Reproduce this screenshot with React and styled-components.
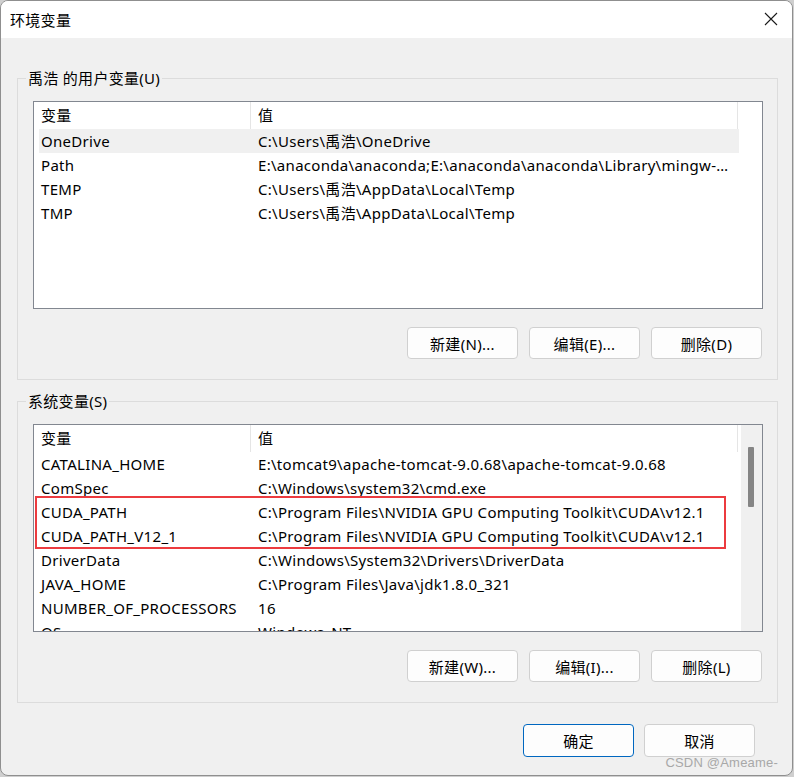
import React from 'react';
import styled, { createGlobalStyle } from 'styled-components';

const GlobalStyle = createGlobalStyle`
  *, *::before, *::after {
    box-sizing: border-box;
  }
  html, body {
    margin: 0;
    padding: 0;
    background: #cfcfcf;
  }
  body {
    font-family: "Noto Sans", "Noto Sans CJK SC", sans-serif;
    font-size: 15px;
    letter-spacing: 0.3px;
    color: #000000;
  }
`;

const Window = styled.div`
  position: relative;
  width: 793px;
  height: 776px;
  border: 1px solid #8f8f8f;
  border-radius: 8px;
  overflow: hidden;
  background: #f0f0f0;
  display: flex;
  flex-direction: column;
`;

const TitleBar = styled.div`
  height: 37px;
  flex: none;
  background: #ffffff;
  display: flex;
  align-items: center;
  justify-content: space-between;
  padding: 0 14px 0 9px;
`;

const Title = styled.span`
  font-size: 15px;
  padding-bottom: 1px;
`;

const CloseButton = styled.div`
  width: 14px;
  height: 14px;
  display: flex;
  margin-bottom: 2px;
`;

const Content = styled.div`
  flex: 1;
  padding: 40px 14px 0 16px;
  display: flex;
  flex-direction: column;
`;

const Group = styled.div`
  position: relative;
  height: 302px;
  border: 1px solid #dcdcdc;
  padding: 22px 14px 0 15px;
  margin-bottom: ${(p) => p.$gap || 0}px;
  display: flex;
  flex-direction: column;
`;

const Legend = styled.span`
  position: absolute;
  top: -11px;
  left: 8px;
  padding: 0 2px;
  line-height: 20px;
  background: #f0f0f0;
`;

const ListBox = styled.div`
  position: relative;
  width: 730px;
  height: 208px;
  flex: none;
  border: 1px solid #828790;
  background: #ffffff;
  display: flex;
  overflow: hidden;
`;

const ListMain = styled.div`
  flex: 1;
  min-width: 0;
`;

const Header = styled.div`
  display: grid;
  grid-template-columns: 217px 487px 1fr;
  height: 27px;
`;

const HeaderCell = styled.div`
  padding-left: 7px;
  line-height: 27px;
  border-right: ${(p) => (p.$last ? 'none' : '1px solid #e5e5e5')};
`;

const Row = styled.div`
  margin-left: 5px;
  margin-right: 2px;
  display: grid;
  grid-template-columns: 217px 1fr;
  height: 24px;
  line-height: 24px;
  background: ${(p) => (p.$selected ? '#f0f0f0' : 'transparent')};
`;

const Cell = styled.div`
  padding-left: 2px;
  white-space: nowrap;
  overflow: hidden;
  text-overflow: ellipsis;
`;

const ScrollTrack = styled.div`
  width: 21px;
  flex: none;
  position: relative;
  background: ${(p) => (p.$visible ? '#f0f0f0' : '#ffffff')};
`;

const ScrollThumb = styled.div`
  position: absolute;
  left: 7px;
  top: 22px;
  width: 6px;
  height: 60px;
  border-radius: 1px;
  background: #858585;
`;

const Highlight = styled.div`
  position: absolute;
  left: 1px;
  top: 71px;
  width: 691px;
  height: 53px;
  border: 2px solid #ec3b3f;
  pointer-events: none;
`;

const ButtonRow = styled.div`
  display: flex;
  justify-content: flex-end;
  gap: 11px;
  margin-top: 18px;
  padding-right: 1px;
`;

const Button = styled.button`
  width: 111px;
  height: ${(p) => (p.$primary !== undefined ? 33 : 32)}px;
  border: 1px solid ${(p) => (p.$primary ? '#0067c0' : '#d0d0d0')};
  border-radius: 4px;
  background: #fdfdfd;
  font-family: "Noto Sans", "Noto Sans CJK SC", sans-serif;
  font-size: 15px;
  letter-spacing: 0.3px;
  color: #000000;
  padding: 0;
`;

const Footer = styled.div`
  display: flex;
  justify-content: flex-end;
  gap: 10px;
  margin-top: 21px;
  padding-right: 23px;
`;

const Watermark = styled.div`
  position: absolute;
  right: 14px;
  bottom: 5px;
  font-family: "Liberation Sans", Arial, sans-serif;
  font-size: 13px;
  color: #a8a8a8;
  letter-spacing: 0.2px;
`;

const userVars = [
  ['OneDrive', 'C:\\Users\\禹浩\\OneDrive'],
  ['Path', 'E:\\anaconda\\anaconda;E:\\anaconda\\anaconda\\Library\\mingw-w...'],
  ['TEMP', 'C:\\Users\\禹浩\\AppData\\Local\\Temp'],
  ['TMP', 'C:\\Users\\禹浩\\AppData\\Local\\Temp'],
];

const systemVars = [
  ['CATALINA_HOME', 'E:\\tomcat9\\apache-tomcat-9.0.68\\apache-tomcat-9.0.68'],
  ['ComSpec', 'C:\\Windows\\system32\\cmd.exe'],
  ['CUDA_PATH', 'C:\\Program Files\\NVIDIA GPU Computing Toolkit\\CUDA\\v12.1'],
  ['CUDA_PATH_V12_1', 'C:\\Program Files\\NVIDIA GPU Computing Toolkit\\CUDA\\v12.1'],
  ['DriverData', 'C:\\Windows\\System32\\Drivers\\DriverData'],
  ['JAVA_HOME', 'C:\\Program Files\\Java\\jdk1.8.0_321'],
  ['NUMBER_OF_PROCESSORS', '16'],
  ['OS', 'Windows_NT'],
];

const VarList = ({ rows, selected, scroll, children }) => (
  <ListBox>
    <ListMain>
      <Header>
        <HeaderCell>变量</HeaderCell>
        <HeaderCell>值</HeaderCell>
        <HeaderCell $last />
      </Header>
      {rows.map(([name, value], i) => (
        <Row key={name} $selected={i === selected}>
          <Cell>{name}</Cell>
          <Cell>{value}</Cell>
        </Row>
      ))}
    </ListMain>
    <ScrollTrack $visible={scroll}>{scroll && <ScrollThumb />}</ScrollTrack>
    {children}
  </ListBox>
);

const App = () => (
  <>
    <GlobalStyle />
    <Window>
      <TitleBar>
        <Title>环境变量</Title>
        <CloseButton>
          <svg width="14" height="14" viewBox="0 0 14 14">
            <path d="M1 1 L13 13 M13 1 L1 13" stroke="#1a1a1a" strokeWidth="1.1" fill="none" />
          </svg>
        </CloseButton>
      </TitleBar>
      <Content>
        <Group $gap={21}>
          <Legend>禹浩 的用户变量(U)</Legend>
          <VarList rows={userVars} selected={0} />
          <ButtonRow>
            <Button>新建(N)...</Button>
            <Button>编辑(E)...</Button>
            <Button>删除(D)</Button>
          </ButtonRow>
        </Group>
        <Group>
          <Legend>系统变量(S)</Legend>
          <VarList rows={systemVars} scroll>
            <Highlight />
          </VarList>
          <ButtonRow>
            <Button>新建(W)...</Button>
            <Button>编辑(I)...</Button>
            <Button>删除(L)</Button>
          </ButtonRow>
        </Group>
        <Footer>
          <Button $primary>确定</Button>
          <Button $primary={false}>取消</Button>
        </Footer>
      </Content>
      <Watermark>CSDN @Ameame-</Watermark>
    </Window>
  </>
);

export default App;
